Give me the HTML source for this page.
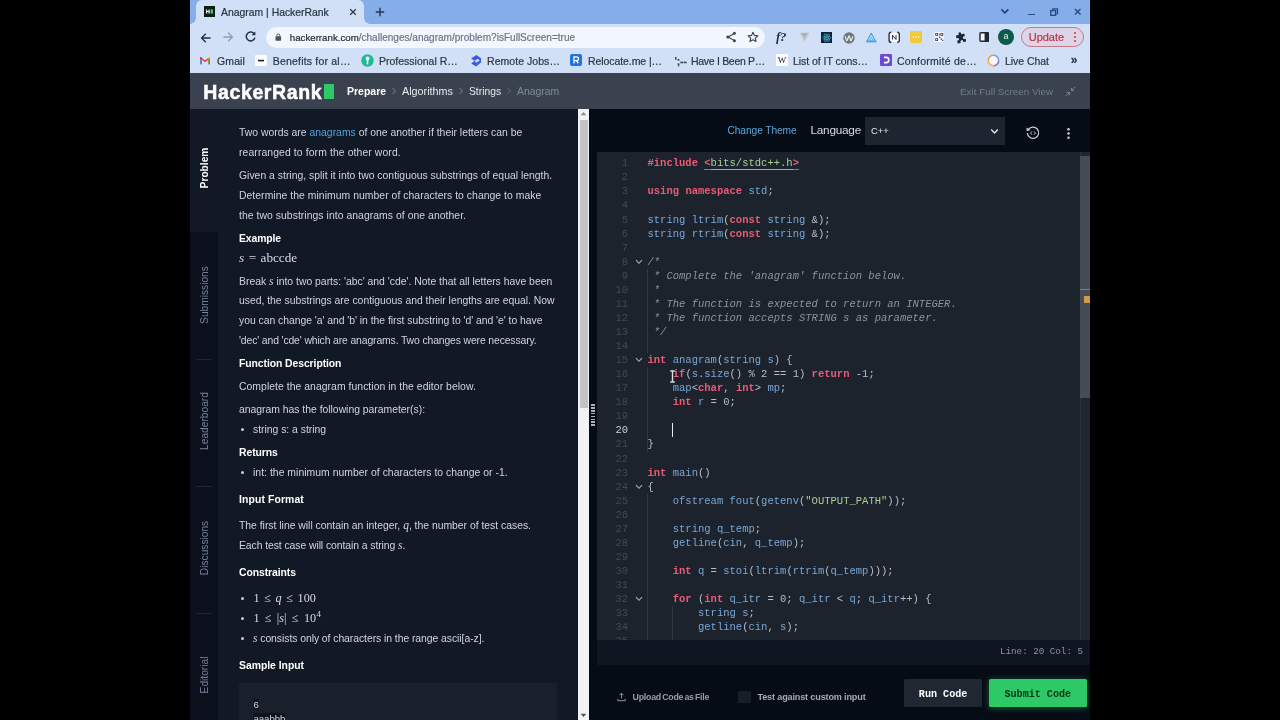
<!DOCTYPE html>
<html lang="en">
<head>
<meta charset="utf-8">
<title>Anagram | HackerRank</title>
<style>
*{box-sizing:border-box;margin:0;padding:0}
html,body{width:1280px;height:720px;overflow:hidden;background:#000}
body{position:relative;font-family:"Liberation Sans",sans-serif;-webkit-font-smoothing:antialiased}
.a{position:absolute;white-space:pre}
.bar{position:absolute;top:0;height:720px;background:#000;z-index:50}
/* ---------- browser chrome ---------- */
#tabstrip{left:190px;top:0;width:900px;height:24px;background:#85adea}
#tab{left:196px;top:0;width:168px;height:24px;background:#d2e0f7;border-radius:6px 6px 0 0}
#tab:before,#tab:after{content:"";position:absolute;bottom:0;width:6px;height:6px;background:radial-gradient(circle at 0 0,rgba(0,0,0,0) 5.5px,#d2e0f7 6px)}
#tab:before{left:-6px}
#tab:after{right:-6px;transform:scaleX(-1)}
#toolbar{left:190px;top:24px;width:900px;height:25px;background:#d2e0f7}
#bmbar{left:190px;top:49px;width:900px;height:24px;background:#d2e0f7}
#omni{left:266px;top:27px;width:499px;height:21px;border-radius:11px;background:#f2f6fd}
.ui{color:#27303d;font-size:10.5px;line-height:12px;-webkit-text-stroke:.2px}
.bm{top:55px;color:#2b3543;font-size:10.5px;line-height:12px;-webkit-text-stroke:.2px #2b3543}
/* ---------- hackerrank ---------- */
#hdr{left:190px;top:73.4px;width:900px;height:35.4px;background:#39424e}
#leftbg{left:190px;top:108px;width:388px;height:612px;background:#111926}
#sidebg{left:190px;top:232px;width:28px;height:488px;background:#0a111c}
#rightbg{left:589px;top:108px;width:501px;height:612px;background:#060c16}
.side{left:190px;width:28px;text-align:center;color:#6f7c8e;font-size:10.2px}
.side span{position:absolute;left:50%;top:50%;transform:translate(-50%,-50%) rotate(-90deg);white-space:nowrap}
.t{font-size:10.4px;line-height:15px;color:#cfd5de}
.b{font-weight:bold;color:#fff}
.m{font-family:"Liberation Serif",serif}
.mono{font-family:"Liberation Mono",monospace}
#code{font-family:"Liberation Mono",monospace;font-size:10.52px;line-height:14.06px;color:#b6bec9}
#code div{position:absolute;white-space:pre;height:14.06px}
.ln{left:0;width:31px;text-align:right;color:#3f4853}
.ln.cur{color:#c9cfd7}
.cl{left:50.5px}
#code b{color:#ea5b77;font-weight:bold}
#code u{color:#79a6d5;text-decoration:none}
#code em{color:#a9cf95;font-style:normal}
#code i{color:#8a94a2;font-style:italic}
.lk b{border-bottom:1px solid #d0596e}
.lk em{border-bottom:1px solid #93bb82}
.sep{left:196px;width:16px;height:1px;background:#1d2633}
</style>
</head>
<body><div id="wrap" style="position:absolute;left:0;top:0;width:1280px;height:720px;will-change:transform">
<!-- ================= BROWSER CHROME ================= -->
<div class="a" id="tabstrip"></div>
<div class="a" id="tab"></div>
<div class="a" id="toolbar"></div>
<div class="a" id="bmbar"></div>
<div class="a" id="omni"></div>
<!-- tab -->
<svg class="a" style="left:204px;top:6px" width="11" height="11" viewBox="0 0 11 11"><rect width="11" height="11" fill="#0b1f17"/><path d="M2 3.4h1.2v1.5h1.3V3.4h1.2v4.2H4.5V6H3.2v1.6H2z" fill="#e9f7ef"/><rect x="6.6" y="3.4" width="2.4" height="4.2" fill="#3fc479"/></svg>
<div class="a ui" style="left:221px;top:7px;font-size:10.4px;color:#2a3340">Anagram | HackerRank</div>
<svg class="a" style="left:349px;top:8px" width="8" height="8" viewBox="0 0 8 8"><path d="M1.2 1.2l5.6 5.6M6.8 1.2L1.2 6.8" stroke="#2f3947" stroke-width="1.3" fill="none"/></svg>
<svg class="a" style="left:375px;top:7px" width="10" height="10" viewBox="0 0 10 10"><path d="M5 .8v8.4M.8 5h8.4" stroke="#2b3543" stroke-width="1.4" fill="none"/></svg>
<!-- window controls -->
<svg class="a" style="left:1000px;top:8.400px" width="10" height="7" viewBox="0 0 10 7"><path d="M1.400 1.400L4.900 4.800 8.400 1.400" stroke="#24427a" stroke-width="1.700" fill="none"/></svg>
<div class="a" style="left:1028px;top:13.600px;width:7.200px;height:1.700px;background:#2c4a80"></div>
<svg class="a" style="left:1050px;top:7.500px" width="8.500" height="8.500" viewBox="0 0 8.500 8.500"><rect x=".8" y="2.600" width="4.800" height="4.800" fill="none" stroke="#2c4a80" stroke-width="1.400"/><path d="M2.800 2V.9h4.700v4.700H6.400" fill="none" stroke="#2c4a80" stroke-width="1.300"/></svg>
<svg class="a" style="left:1073.500px;top:8.200px" width="7.500" height="7.500" viewBox="0 0 8 8"><path d="M1 1l6 6M7 1L1 7" stroke="#2c4a80" stroke-width="1.600" fill="none"/></svg>
<!-- nav buttons -->
<svg class="a" style="left:199.800px;top:31.500px" width="12" height="12" viewBox="0 0 12 12"><path d="M10.6 6H2M5.8 1.8L1.6 6l4.2 4.2" stroke="#27303d" stroke-width="1.4" fill="none"/></svg>
<svg class="a" style="left:222px;top:31px" width="12" height="12" viewBox="0 0 12 12"><path d="M1.4 6H10M6.2 1.8L10.4 6l-4.2 4.2" stroke="#8d9db8" stroke-width="1.3" fill="none"/></svg>
<svg class="a" style="left:244px;top:30px" width="13" height="13" viewBox="0 0 13 13"><path d="M10.4 4.2A4.4 4.4 0 1 0 10.9 7.6" stroke="#27303d" stroke-width="1.5" fill="none"/><path d="M11.4 1.4v3.8H7.6z" fill="#27303d"/></svg>
<!-- omnibox -->
<svg class="a" style="left:275.200px;top:32.800px" width="6.600" height="8.200" viewBox="0 0 8 10"><rect x=".6" y="4" width="6.8" height="5.4" rx=".8" fill="#4a5260"/><path d="M2.2 4.2V2.8a1.8 1.8 0 0 1 3.6 0v1.4" fill="none" stroke="#4a5260" stroke-width="1.1"/></svg>
<div class="a ui" style="left:289.800px;top:31.500px;font-size:9.700px;color:#1e2632;-webkit-text-stroke:.2px">hackerrank.com<span style="color:#6c7686;font-size:10.05px">/challenges/anagram/problem?isFullScreen=true</span></div>
<svg class="a" style="left:725px;top:31px" width="12" height="12" viewBox="0 0 12 12"><path d="M9.2 2.4L3 6l6.2 3.6" stroke="#3a4352" stroke-width="1.1" fill="none"/><circle cx="9.4" cy="2.3" r="1.5" fill="#3a4352"/><circle cx="2.8" cy="6" r="1.5" fill="#3a4352"/><circle cx="9.4" cy="9.7" r="1.5" fill="#3a4352"/></svg>
<svg class="a" style="left:747px;top:31px" width="12" height="12" viewBox="0 0 12 12"><path d="M6 1.2l1.45 3.2 3.45.35-2.6 2.3.75 3.4L6 8.7l-3.05 1.75.75-3.4-2.6-2.3 3.45-.35z" fill="none" stroke="#3a4352" stroke-width="1.1" stroke-linejoin="round"/></svg>
<!-- extensions -->
<div class="a" style="left:776px;top:29px;font:italic bold 13px 'Liberation Serif',serif;color:#27314a;letter-spacing:-.3px">f?</div>
<svg class="a" style="left:798.500px;top:32px" width="11" height="10" viewBox="0 0 13 12"><path d="M.6 1h3l2.900 5 2.900-5h3L6.500 11.400z" fill="#bcc2ca"/><path d="M3.600 1h2l.9 1.600L7.400 1h2L6.500 6z" fill="#9aa1a9"/></svg>
<svg class="a" style="left:820.500px;top:31.500px" width="11.500" height="11.500" viewBox="0 0 12 12"><rect width="12" height="12" fill="#0f2233"/><g fill="none" stroke="#45b9d6" stroke-width=".65"><ellipse cx="6" cy="6" rx="4.500" ry="1.700"/><ellipse cx="6" cy="6" rx="4.500" ry="1.700" transform="rotate(60 6 6)"/><ellipse cx="6" cy="6" rx="4.500" ry="1.700" transform="rotate(120 6 6)"/></g><circle cx="6" cy="6" r=".9" fill="#45b9d6"/></svg>
<svg class="a" style="left:843px;top:31.500px" width="12" height="12" viewBox="0 0 13 13"><circle cx="6.500" cy="6.500" r="6.200" fill="#70787b"/><path d="M2 4.600C3 4.600 3.200 9.400 4.300 9.400S5.500 4.200 6.500 4.200 7.700 9.400 8.700 9.400 10 4.600 11 4.600" fill="none" stroke="#f1f4f5" stroke-width="1.300"/></svg>
<svg class="a" style="left:865px;top:31.500px" width="12.500" height="11" viewBox="0 0 14 12.500"><path d="M7 1.400L12 10.400H2z" fill="none" stroke="#3a9fe0" stroke-width="1.200" stroke-linejoin="round"/><path d="M1.200 11.200H13.200" stroke="#3a9fe0" stroke-width="1.100"/><path d="M7 5.600L9 9.200H5z" fill="none" stroke="#3a9fe0" stroke-width=".7"/></svg>
<svg class="a" style="left:887.500px;top:31px" width="12.500" height="12.500" viewBox="0 0 14 14"><rect x="2.600" y="1.600" width="8.800" height="10.800" rx="1.500" fill="#fff"/><path d="M3.800 1.200Q1.200 1.200 1.200 4v6q0 2.800 2.600 2.800M10.200 1.200q2.600 0 2.600 2.800v6q0 2.800-2.600 2.800" fill="none" stroke="#27303d" stroke-width="1.500"/><path d="M5 9.600V4.600L9 9.600V4.600" fill="none" stroke="#27303d" stroke-width="1.100"/></svg>
<svg class="a" style="left:910px;top:31px" width="12" height="12" viewBox="0 0 12 12"><rect width="12" height="12" rx="1.500" fill="#f2c93a"/><circle cx="3.400" cy="6" r=".8" fill="#fff"/><circle cx="6" cy="6" r=".8" fill="#fff"/><circle cx="8.600" cy="6" r=".8" fill="#fff"/></svg>
<svg class="a" style="left:933.500px;top:32px" width="10.500" height="10" viewBox="0 0 12 12"><rect width="12" height="12" fill="#f1f5fb"/><g fill="#3b4352"><rect x="1.200" y="1.200" width="3.400" height="3.400"/><rect x="7.400" y="1.200" width="3.400" height="3.400"/><rect x="1.200" y="7.400" width="3.400" height="3.400"/><rect x="5.600" y="5.600" width="1.600" height="1.600"/><rect x="7.800" y="7.800" width="1.600" height="1.600"/><rect x="9.400" y="9.400" width="1.500" height="1.500"/><rect x="5.600" y="2" width="1" height="2"/></g><g fill="#f1f5fb"><rect x="2.200" y="2.200" width="1.400" height="1.400"/><rect x="8.400" y="2.200" width="1.400" height="1.400"/><rect x="2.200" y="8.400" width="1.400" height="1.400"/></g></svg>
<svg class="a" style="left:955px;top:31.500px" width="12" height="12" viewBox="0 0 14 14"><g transform="rotate(-14 7 7)"><path d="M5.400 1.600a1.500 1.500 0 0 1 3 0V2.800h2.800a.8.800 0 0 1 .8.800v2.300h-1.200a1.600 1.600 0 0 0 0 3.200H12v2.500a.8.800 0 0 1-.8.800H8.600v-1.200a1.600 1.600 0 0 0-3.200 0v1.200H2.600a.8.800 0 0 1-.8-.8V9.100h1a1.600 1.600 0 0 0 0-3.200h-1V3.600a.8.800 0 0 1 .8-.8h2.800z" fill="#1f2733"/></g></svg>
<svg class="a" style="left:978.700px;top:32px" width="10.500" height="10" viewBox="0 0 12 12"><rect x=".9" y=".9" width="10.200" height="10.200" rx=".8" fill="#f4f7fc" stroke="#1f2733" stroke-width="1.700"/><rect x="6.400" y="1" width="4.600" height="10" fill="#1f2733"/></svg>
<div class="a" style="left:998px;top:29px;width:16px;height:16px;border-radius:8px;background:#0c5a49;color:#e6f2ee;font-size:9px;line-height:14.500px;text-align:center">a</div>
<div class="a" style="left:1020.500px;top:27.300px;width:63px;height:19.600px;border-radius:10px;border:1px solid #c27a89;background:#ddd5e7"></div>
<div class="a ui" style="left:1028.700px;top:31px;font-size:11px;color:#bd3145">Update</div>
<svg class="a" style="left:1073px;top:31px" width="4" height="12" viewBox="0 0 4 12"><circle cx="2" cy="2" r="1.100" fill="#cf4650"/><circle cx="2" cy="6" r="1.100" fill="#cf4650"/><circle cx="2" cy="10" r="1.100" fill="#cf4650"/></svg>
<!-- bookmarks -->
<svg class="a" style="left:200.200px;top:56.800px" width="10.200" height="7.800" viewBox="0 0 11 9"><path d="M.8 8.400V1.400L5.500 5l4.700-3.600v7" fill="none" stroke="#e34133" stroke-width="1.600"/><path d="M.8 8.400V2.500" stroke="#4285f4" stroke-width="1.600"/><path d="M10.200 8.400V2.500" stroke="#34a853" stroke-width="1.600"/><path d="M.8 2.400V1.400l1 .8" stroke="#c5221f" stroke-width="1.600" fill="none"/><path d="M10.200 2.400V1.400l-1 .8" stroke="#fbbc04" stroke-width="1.600" fill="none"/></svg>
<div class="a bm" style="left:217px;letter-spacing:0.11px">Gmail</div>
<svg class="a" style="left:255px;top:55px" width="12" height="11" viewBox="0 0 12 11"><rect width="12" height="11" rx="1.200" fill="#fbfcfe"/><rect x="3" y="4.800" width="6" height="1.600" fill="#20242b"/></svg>
<div class="a bm" style="left:272.7px;letter-spacing:0.2px">Benefits for al…</div>
<svg class="a" style="left:361px;top:54px" width="13" height="13" viewBox="0 0 13 13"><circle cx="6.500" cy="6.500" r="6.200" fill="#1fb795"/><circle cx="6.500" cy="4.600" r="2" fill="#e9fbf6"/><path d="M5.700 5.600h1.600v4.800H5.700z" fill="#e9fbf6"/></svg>
<div class="a bm" style="left:379px;letter-spacing:0.0px">Professional R…</div>
<svg class="a" style="left:470px;top:54px" width="12" height="13" viewBox="0 0 12 13"><path d="M6.400 1L1 4.600l3.600 2.200L1.200 9.400 6 12.400l5-3.800V4.200z" fill="#3d5be0"/><path d="M4.600 6.800l3.200-2 2 1.600-3.600 2.400z" fill="#d2e0f7"/></svg>
<div class="a bm" style="left:487px;letter-spacing:0.05px">Remote Jobs…</div>
<svg class="a" style="left:570px;top:54px" width="12" height="12" viewBox="0 0 12 12"><rect width="12" height="12" rx="2" fill="#1f74e0"/><path d="M4 9.400V2.800h2.600a1.900 1.900 0 0 1 0 3.800H4M6.400 6.600L8.400 9.400" fill="none" stroke="#fff" stroke-width="1.300"/></svg>
<div class="a bm" style="left:588px;letter-spacing:-0.08px">Relocate.me |…</div>
<div class="a bm" style="left:674.500px;letter-spacing:-.2px;font-weight:bold;color:#3f4957">';--</div>
<div class="a bm" style="left:691px;letter-spacing:-0.3px">Have I Been P…</div>
<svg class="a" style="left:776px;top:54px" width="12" height="12" viewBox="0 0 12 12"><rect width="12" height="12" rx="1" fill="#fbfcfe"/><text x="6" y="9.300" text-anchor="middle" font-family="Liberation Serif,serif" font-size="9" fill="#20242b">W</text></svg>
<div class="a bm" style="left:793px;letter-spacing:-0.04px">List of IT cons…</div>
<svg class="a" style="left:880px;top:54px" width="12" height="12" viewBox="0 0 12 12"><rect width="12" height="12" rx="1.200" fill="#6a4bd8"/><path d="M4 3.400h2.200a2.600 2.600 0 0 1 0 5.200H4" fill="none" stroke="#fff" stroke-width="1.600"/></svg>
<div class="a bm" style="left:897px;letter-spacing:0.25px">Conformité de…</div>
<svg class="a" style="left:987px;top:54px" width="13" height="13" viewBox="0 0 13 13"><circle cx="6.500" cy="6.500" r="5.200" fill="#f8fafd" stroke="#f28b50" stroke-width="1.400"/><path d="M6.500 1.300a5.200 5.200 0 0 1 5.200 5.200" fill="none" stroke="#5db7f0" stroke-width="1.400"/><path d="M11.700 6.500a5.200 5.200 0 0 1-5.200 5.200" fill="none" stroke="#9b6ee8" stroke-width="1.400"/><path d="M6.500 11.700a5.200 5.200 0 0 1-5.200-5.200" fill="none" stroke="#f2c14e" stroke-width="1.400"/></svg>
<div class="a bm" style="left:1005px;letter-spacing:-0.04px">Live Chat</div>
<div class="a bm" style="left:1070.700px;font-size:12px;top:53.800px;font-weight:bold">»</div>


<!-- ================= HACKERRANK HEADER ================= -->
<div class="a" style="left:0;top:0;z-index:5">
<div class="a" id="hdr"></div>
<div class="a" style="left:203.3px;top:80.6px;font:bold 19.5px/23px 'Liberation Sans',sans-serif;color:#fff;letter-spacing:.62px;-webkit-text-stroke:.5px #fff">HackerRank</div>
<div class="a" style="left:323.5px;top:84.4px;width:10.3px;height:14.2px;background:#2ec866"></div>
<div class="a" style="left:347px;top:84.5px;font-size:10.5px;line-height:13px;color:#fff;font-weight:bold;">Prepare</div>
<div class="a" style="left:402px;top:84.5px;font-size:10.8px;line-height:13px;color:#e8ebef;">Algorithms</div>
<div class="a" style="left:469px;top:84.5px;font-size:10.3px;line-height:13px;color:#e8ebef;">Strings</div>
<div class="a" style="left:517px;top:84.5px;font-size:10.4px;line-height:13px;color:#7f8a98;">Anagram</div>
<svg class="a" style="left:391px;top:87px" width="6" height="8" viewBox="0 0 6 8"><path d="M1.5 1l3 3-3 3" fill="none" stroke="#7d8793" stroke-width="1"/></svg>
<svg class="a" style="left:458px;top:87px" width="6" height="8" viewBox="0 0 6 8"><path d="M1.5 1l3 3-3 3" fill="none" stroke="#7d8793" stroke-width="1"/></svg>
<svg class="a" style="left:506px;top:87px" width="6" height="8" viewBox="0 0 6 8"><path d="M1.5 1l3 3-3 3" fill="none" stroke="#5d6773" stroke-width="1"/></svg>
<div class="a" style="left:960px;top:84.5px;font-size:9.9px;line-height:13px;color:#717c8a">Exit Full Screen View</div>
<svg class="a" style="left:1065px;top:86px" width="11" height="11" viewBox="0 0 11 11"><path d="M10 1L6.600 4.400M6.400 1.800v2.800h2.800M1 10l3.400-3.400M4.600 9.200V6.400H1.800" fill="none" stroke="#7a8593" stroke-width="1"/></svg>

</div>

<!-- ================= LEFT PANEL ================= -->
<div class="a" id="leftbg"></div>
<div class="a" id="sidebg"></div>
<div class="a side" style="top:108px;height:120px;color:#fff;font-weight:bold;"><span>Problem</span></div>
<div class="a side" style="top:235px;height:120px;color:#74829a;"><span>Submissions</span></div>
<div class="a side" style="top:361px;height:120px;color:#74829a;"><span>Leaderboard</span></div>
<div class="a side" style="top:488px;height:120px;color:#74829a;"><span>Discussions</span></div>
<div class="a side" style="top:615px;height:120px;color:#74829a;"><span>Editorial</span></div>
<div class="a sep" style="top:358.5px"></div>
<div class="a sep" style="top:485.5px"></div>
<div class="a sep" style="top:612.5px"></div>
<div class="a t" style="left:239px;top:124.5px;letter-spacing:0.004px;">Two words are <span style="color:#4ea3d8">anagrams</span> of one another if their letters can be</div>
<div class="a t" style="left:239px;top:144.5px;letter-spacing:0.104px;">rearranged to form the other word.</div>
<div class="a t" style="left:239px;top:167.5px;letter-spacing:0.010px;">Given a string, split it into two contiguous substrings of equal length.</div>
<div class="a t" style="left:239px;top:187.5px;letter-spacing:0.044px;">Determine the minimum number of characters to change to make</div>
<div class="a t" style="left:239px;top:207.5px;letter-spacing:0.048px;">the two substrings into anagrams of one another.</div>
<div class="a t b" style="left:239px;top:230.5px;letter-spacing:-0.107px;">Example</div>
<div class="a m" style="left:239px;top:249px;font-size:13.2px;line-height:18px;color:#d5dae2;word-spacing:1.2px"><i>s</i> = abccde</div>
<div class="a t" style="left:239px;top:273.5px;letter-spacing:-0.002px;">Break <i class="m" style="font-size:11.5px">s</i> into two parts: 'abc' and 'cde'. Note that all letters have been</div>
<div class="a t" style="left:239px;top:293.0px;letter-spacing:-0.014px;">used, the substrings are contiguous and their lengths are equal. Now</div>
<div class="a t" style="left:239px;top:313.0px;letter-spacing:-0.034px;">you can change 'a' and 'b' in the first substring to 'd' and 'e' to have</div>
<div class="a t" style="left:239px;top:332.5px;letter-spacing:-0.128px;">'dec' and 'cde' which are anagrams. Two changes were necessary.</div>
<div class="a t b" style="left:239px;top:355.5px;letter-spacing:-0.076px;">Function Description</div>
<div class="a t" style="left:239px;top:378.5px;letter-spacing:0.046px;">Complete the anagram function in the editor below.</div>
<div class="a t" style="left:239px;top:401.5px;letter-spacing:-0.014px;">anagram has the following parameter(s):</div>
<div class="a" style="left:241px;top:427.5px;width:3.4px;height:3.4px;border-radius:2px;background:#c9d0da"></div>
<div class="a t" style="left:253px;top:421.5px;letter-spacing:-0.019px;">string s: a string</div>
<div class="a t b" style="left:239px;top:444.5px;letter-spacing:-0.067px;">Returns</div>
<div class="a" style="left:241px;top:470.5px;width:3.4px;height:3.4px;border-radius:2px;background:#c9d0da"></div>
<div class="a t" style="left:253px;top:464.5px;letter-spacing:0.032px;">int: the minimum number of characters to change or -1.</div>
<div class="a t b" style="left:239px;top:491.5px;letter-spacing:0.117px;">Input Format</div>
<div class="a t" style="left:239px;top:518.0px;letter-spacing:-0.012px;">The first line will contain an integer, <i class="m" style="font-size:11.5px">q</i>, the number of test cases.</div>
<div class="a t" style="left:239px;top:538.0px;letter-spacing:-0.072px;">Each test case will contain a string <i class="m" style="font-size:11.5px">s</i>.</div>
<div class="a t b" style="left:239px;top:564.5px;letter-spacing:-0.076px;">Constraints</div>
<div class="a" style="left:241px;top:596.5px;width:3.4px;height:3.4px;border-radius:2px;background:#c9d0da"></div>
<div class="a m" style="left:253.4px;top:589px;font-size:12.2px;line-height:18px;color:#d5dae2;word-spacing:1.6px">1 ≤ <i>q</i> ≤ 100</div>
<div class="a" style="left:241px;top:616.5px;width:3.4px;height:3.4px;border-radius:2px;background:#c9d0da"></div>
<div class="a m" style="left:253.4px;top:609px;font-size:12.2px;line-height:18px;color:#d5dae2;word-spacing:2.3px">1 ≤ |<i>s</i>| ≤ 10<sup style="font-size:9px;margin-left:.5px;line-height:0;vertical-align:5px">4</sup></div>
<div class="a" style="left:241px;top:636.5px;width:3.4px;height:3.4px;border-radius:2px;background:#c9d0da"></div>
<div class="a t" style="left:253px;top:630.5px;letter-spacing:-0.055px;"><i class="m" style="font-size:11.5px">s</i> consists only of characters in the range ascii[a-z].</div>
<div class="a t b" style="left:239px;top:657.5px;letter-spacing:-0.021px;">Sample Input</div>
<div class="a" style="left:239px;top:683px;width:317.5px;height:40px;background:#18202c"></div>
<div class="a" style="left:253.4px;top:699px;font-size:9.6px;line-height:12px;color:#d5dae2"><span style="background:#0d131d">6</span></div>
<div class="a" style="left:253.4px;top:713px;font-size:9.6px;line-height:12px;color:#d5dae2"><span style="background:#0d131d">aaabbb</span></div>
<div class="a" style="left:578px;top:108px;width:11px;height:612px;background:#f1f2f5"></div>
<div class="a" style="left:580px;top:120px;width:7.5px;height:288px;background:#c1c3c6"></div>
<svg class="a" style="left:580px;top:111px" width="7" height="5" viewBox="0 0 7 5"><path d="M.6 4.200L3.500 1l2.900 3.200z" fill="#8a8d92"/></svg>
<svg class="a" style="left:580px;top:713px" width="7" height="5" viewBox="0 0 7 5"><path d="M.6.800L3.500 4l2.900-3.200z" fill="#50545a"/></svg>



<!-- ================= RIGHT PANEL ================= -->
<div class="a" id="rightbg"></div>
<div class="a" style="left:727.5px;top:124px;font-size:10.2px;line-height:14px;color:#59a5dc;letter-spacing:-0.079px;">Change Theme</div>
<div class="a" style="left:810.5px;top:121.8px;font-size:11.8px;line-height:16px;color:#d6dbe3;letter-spacing:-0.250px;">Language</div>
<div class="a" style="left:865px;top:117px;width:140px;height:28px;background:#1e2530"></div>
<div class="a" style="left:871px;top:123.700px;font-size:9.400px;line-height:14px;color:#e3e7ec">C++</div>
<svg class="a" style="left:990px;top:128px" width="9" height="7" viewBox="0 0 9 7"><path d="M1.200 1.600L4.500 4.900 7.800 1.600" fill="none" stroke="#e3e7ec" stroke-width="1.400"/></svg>
<svg class="a" style="left:1025.300px;top:124.500px" width="16" height="16" viewBox="0 0 17 17"><path d="M3.300 5.200A6 6 0 1 1 2.500 8.600" fill="none" stroke="#c9cfd8" stroke-width="1.300"/><path d="M1.400 2.600l.6 4 3.800-1.200z" fill="#c9cfd8"/><path d="M7.400 6.800L5.800 8.600l1.600 1.800M9.600 6.800l1.600 1.800-1.600 1.800" fill="none" stroke="#c9cfd8" stroke-width="1"/></svg>
<svg class="a" style="left:1065.500px;top:127px" width="5" height="13" viewBox="0 0 5 13"><circle cx="2.500" cy="2.300" r="1.250" fill="#c9cfd8"/><circle cx="2.500" cy="6.500" r="1.250" fill="#c9cfd8"/><circle cx="2.500" cy="10.700" r="1.250" fill="#c9cfd8"/></svg>
<div class="a" style="left:597px;top:152px;width:493px;height:488px;background:#1c232d"></div>
<div class="a" id="code" style="left:597px;top:152px;width:483px;height:488px;overflow:hidden">
<div class="ln" style="top:4.27px">1</div><div class="cl" style="top:4.27px"><b>#include</b> <span class="lk"><b>&lt;</b><em>bits/stdc++.h</em><b>&gt;</b></span></div>
<div class="ln" style="top:18.33px">2</div><div class="cl" style="top:18.33px"></div>
<div class="ln" style="top:32.39px">3</div><div class="cl" style="top:32.39px"><b>using</b> <b>namespace</b> <u>std</u>;</div>
<div class="ln" style="top:46.45px">4</div><div class="cl" style="top:46.45px"></div>
<div class="ln" style="top:60.51px">5</div><div class="cl" style="top:60.51px"><u>string</u> <u>ltrim</u>(<b>const</b> <u>string</u> &amp;);</div>
<div class="ln" style="top:74.57px">6</div><div class="cl" style="top:74.57px"><u>string</u> <u>rtrim</u>(<b>const</b> <u>string</u> &amp;);</div>
<div class="ln" style="top:88.63px">7</div><div class="cl" style="top:88.63px"></div>
<div class="ln" style="top:102.69px">8</div><div class="cl" style="top:102.69px"><i>/*</i></div>
<div class="ln" style="top:116.75px">9</div><div class="cl" style="top:116.75px"><i> * Complete the &#x27;anagram&#x27; function below.</i></div>
<div class="ln" style="top:130.81px">10</div><div class="cl" style="top:130.81px"><i> *</i></div>
<div class="ln" style="top:144.87px">11</div><div class="cl" style="top:144.87px"><i> * The function is expected to return an INTEGER.</i></div>
<div class="ln" style="top:158.93px">12</div><div class="cl" style="top:158.93px"><i> * The function accepts STRING s as parameter.</i></div>
<div class="ln" style="top:172.99px">13</div><div class="cl" style="top:172.99px"><i> */</i></div>
<div class="ln" style="top:187.05px">14</div><div class="cl" style="top:187.05px"></div>
<div class="ln" style="top:201.11px">15</div><div class="cl" style="top:201.11px"><b>int</b> <u>anagram</u>(<u>string</u> <u>s</u>) {</div>
<div class="ln" style="top:215.17px">16</div><div class="cl" style="top:215.17px">    <b>if</b>(<u>s</u>.<u>size</u>() % 2 == 1) <b>return</b> -1;</div>
<div class="ln" style="top:229.23px">17</div><div class="cl" style="top:229.23px">    <u>map</u>&lt;<b>char</b>, <b>int</b>&gt; <u>mp</u>;</div>
<div class="ln" style="top:243.29px">18</div><div class="cl" style="top:243.29px">    <b>int</b> <u>r</u> = 0;</div>
<div class="ln" style="top:257.35px">19</div><div class="cl" style="top:257.35px"></div>
<div class="ln cur" style="top:271.41px">20</div><div class="cl" style="top:271.41px"></div>
<div class="ln" style="top:285.47px">21</div><div class="cl" style="top:285.47px">}</div>
<div class="ln" style="top:299.53px">22</div><div class="cl" style="top:299.53px"></div>
<div class="ln" style="top:313.59px">23</div><div class="cl" style="top:313.59px"><b>int</b> <u>main</u>()</div>
<div class="ln" style="top:327.65px">24</div><div class="cl" style="top:327.65px">{</div>
<div class="ln" style="top:341.71px">25</div><div class="cl" style="top:341.71px">    <u>ofstream</u> <u>fout</u>(<u>getenv</u>(<em>&quot;OUTPUT_PATH&quot;</em>));</div>
<div class="ln" style="top:355.77px">26</div><div class="cl" style="top:355.77px"></div>
<div class="ln" style="top:369.83px">27</div><div class="cl" style="top:369.83px">    <u>string</u> <u>q_temp</u>;</div>
<div class="ln" style="top:383.89px">28</div><div class="cl" style="top:383.89px">    <u>getline</u>(<u>cin</u>, <u>q_temp</u>);</div>
<div class="ln" style="top:397.95px">29</div><div class="cl" style="top:397.95px"></div>
<div class="ln" style="top:412.01px">30</div><div class="cl" style="top:412.01px">    <b>int</b> <u>q</u> = <u>stoi</u>(<u>ltrim</u>(<u>rtrim</u>(<u>q_temp</u>)));</div>
<div class="ln" style="top:426.07px">31</div><div class="cl" style="top:426.07px"></div>
<div class="ln" style="top:440.13px">32</div><div class="cl" style="top:440.13px">    <b>for</b> (<b>int</b> <u>q_itr</u> = 0; <u>q_itr</u> &lt; <u>q</u>; <u>q_itr</u>++) {</div>
<div class="ln" style="top:454.19px">33</div><div class="cl" style="top:454.19px">        <u>string</u> <u>s</u>;</div>
<div class="ln" style="top:468.25px">34</div><div class="cl" style="top:468.25px">        <u>getline</u>(<u>cin</u>, <u>s</u>);</div>
<div class="ln" style="top:482.31px">35</div><div class="cl" style="top:482.31px"></div>
</div>
<svg class="a" style="left:635px;top:258.7px" width="8" height="6" viewBox="0 0 8 6"><path d="M1 1.200L4 4.300 7 1.200" fill="none" stroke="#aab2be" stroke-width="1.100"/></svg>
<svg class="a" style="left:635px;top:357.1px" width="8" height="6" viewBox="0 0 8 6"><path d="M1 1.200L4 4.300 7 1.200" fill="none" stroke="#aab2be" stroke-width="1.100"/></svg>
<svg class="a" style="left:635px;top:483.7px" width="8" height="6" viewBox="0 0 8 6"><path d="M1 1.200L4 4.300 7 1.200" fill="none" stroke="#aab2be" stroke-width="1.100"/></svg>
<svg class="a" style="left:635px;top:596.2px" width="8" height="6" viewBox="0 0 8 6"><path d="M1 1.200L4 4.300 7 1.200" fill="none" stroke="#aab2be" stroke-width="1.100"/></svg>
<div class="a" style="left:647px;top:268.8px;width:1px;height:84.4px;background:#2f3742"></div>
<div class="a" style="left:647px;top:367.2px;width:1px;height:84.4px;background:#2f3742"></div>
<div class="a" style="left:647px;top:493.7px;width:1px;height:154.7px;background:#2f3742"></div>
<div class="a" style="left:672.3px;top:606.2px;width:1px;height:42.2px;background:#2f3742"></div>
<div class="a" style="left:672px;top:423.4px;width:1.300px;height:14px;background:#e8ecf1"></div>
<svg class="a" style="left:669.200px;top:369.9px" width="7" height="13" viewBox="0 0 7 13"><path d="M1.200 .9h1.600l.7.600.7-.600h1.600M1.200 12.100h1.600l.7-.600.7.600h1.600M3.500 1.500v10" fill="none" stroke="#11161d" stroke-width="2.600"/><path d="M1.200 .9h1.600l.7.600.7-.600h1.600M1.200 12.100h1.600l.7-.600.7.600h1.600M3.500 1.500v10" fill="none" stroke="#d9dde3" stroke-width="1.500"/></svg>
<div class="a" style="left:1080px;top:152px;width:10px;height:488px;background:#1f2630;border-left:1px solid #2b323d"></div>
<div class="a" style="left:1080px;top:156px;width:10px;height:242px;background:#454c56"></div>
<div class="a" style="left:1080px;top:288.500px;width:10px;height:1.500px;background:#7b828c"></div>
<div class="a" style="left:1084px;top:295.800px;width:6px;height:7px;background:#cf9c4e"></div>
<div class="a" style="left:597px;top:640px;width:493px;height:25px;background:#0f1622"></div>
<div class="a mono" style="left:1000px;top:646px;font-size:9.220px;line-height:12px;color:#8b939f">Line: 20 Col: 5</div>
<svg class="a" style="left:617.300px;top:692px" width="9" height="9.500" viewBox="0 0 9 9.500"><path d="M4.500 6.400V1.400M2.500 3.200L4.500 1.200l2 2M.8 6.800v1.900h7.400V6.800" fill="none" stroke="#8893a2" stroke-width="1"/></svg>
<div class="a" style="left:632.5px;top:690.5px;font-size:8.8px;line-height:13px;font-weight:bold;color:#929dac;word-spacing:-1.1px;letter-spacing:-0.215px;">Upload Code as File</div>
<div class="a" style="left:737.500px;top:690.500px;width:13.300px;height:12.600px;background:#171e29;border-radius:1px"></div>
<div class="a" style="left:757.5px;top:690.5px;font-size:9.1px;line-height:13px;font-weight:bold;color:#a2abb8;letter-spacing:-0.160px;">Test against custom input</div>
<div class="a" style="left:904px;top:679.400px;width:78.200px;height:27.600px;background:#1f2733;border-radius:1.500px"></div>
<div class="a mono" style="left:904px;top:687.500px;width:78.200px;text-align:center;font-size:10.100px;line-height:13px;font-weight:bold;color:#fff">Run Code</div>
<div class="a" style="left:988.800px;top:679.400px;width:98px;height:27.600px;background:#2ec866;border-radius:1.500px;box-shadow:0 1px 6px rgba(46,200,102,.45)"></div>
<div class="a mono" style="left:988.800px;top:687.500px;width:98px;text-align:center;font-size:10.100px;line-height:13px;font-weight:bold;color:#053417">Submit Code</div>
<div class="a" style="left:591.0px;top:404.30px;width:1.600px;height:1.500px;background:#aab1bd"></div>
<div class="a" style="left:593.2px;top:404.30px;width:1.600px;height:1.500px;background:#aab1bd"></div>
<div class="a" style="left:591.0px;top:407.16px;width:1.600px;height:1.500px;background:#aab1bd"></div>
<div class="a" style="left:593.2px;top:407.16px;width:1.600px;height:1.500px;background:#aab1bd"></div>
<div class="a" style="left:591.0px;top:410.02px;width:1.600px;height:1.500px;background:#aab1bd"></div>
<div class="a" style="left:593.2px;top:410.02px;width:1.600px;height:1.500px;background:#aab1bd"></div>
<div class="a" style="left:591.0px;top:412.88px;width:1.600px;height:1.500px;background:#aab1bd"></div>
<div class="a" style="left:593.2px;top:412.88px;width:1.600px;height:1.500px;background:#aab1bd"></div>
<div class="a" style="left:591.0px;top:415.74px;width:1.600px;height:1.500px;background:#aab1bd"></div>
<div class="a" style="left:593.2px;top:415.74px;width:1.600px;height:1.500px;background:#aab1bd"></div>
<div class="a" style="left:591.0px;top:418.60px;width:1.600px;height:1.500px;background:#aab1bd"></div>
<div class="a" style="left:593.2px;top:418.60px;width:1.600px;height:1.500px;background:#aab1bd"></div>
<div class="a" style="left:591.0px;top:421.46px;width:1.600px;height:1.500px;background:#aab1bd"></div>
<div class="a" style="left:593.2px;top:421.46px;width:1.600px;height:1.500px;background:#aab1bd"></div>
<div class="a" style="left:591.0px;top:424.32px;width:1.600px;height:1.500px;background:#aab1bd"></div>
<div class="a" style="left:593.2px;top:424.32px;width:1.600px;height:1.500px;background:#aab1bd"></div>



<div class="bar" style="left:0;width:190px"></div>
<div class="bar" style="left:1090px;width:190px"></div>
</div></body>
</html>
